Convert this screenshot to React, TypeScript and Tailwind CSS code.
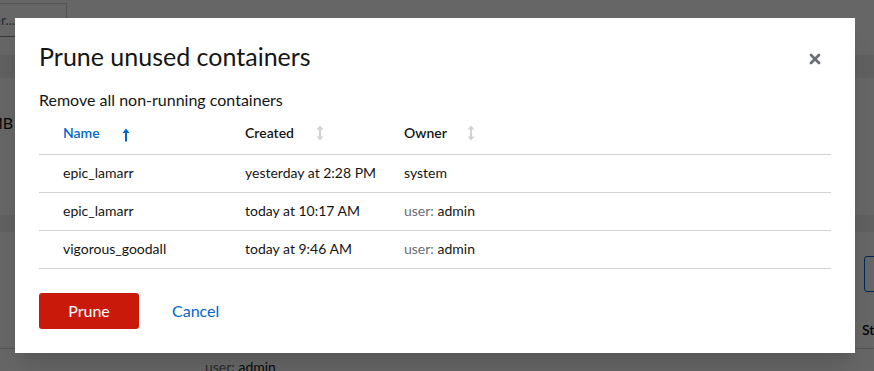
import { X } from "lucide-react";

const rows = [
  { name: "epic_lamarr", created: "yesterday at 2:28 PM", owner: "system", user: false },
  { name: "epic_lamarr", created: "today at 10:17 AM", owner: "admin", user: true },
  { name: "vigorous_goodall", created: "today at 9:46 AM", owner: "admin", user: true },
];

const SortUp = () => (
  <svg width="8" height="14" viewBox="0 0 8 14" className="ml-[22px] inline-block">
    <path d="M4 0.5 L7.5 5 H5 V13.5 H3 V5 H0.5 Z" fill="#0066cc" />
  </svg>
);

const SortNone = () => (
  <svg width="8" height="16" viewBox="0 0 8 16" className="inline-block">
    <path
      d="M4 0.5 L7.5 4.5 H5 V11.5 H7.5 L4 15.5 L0.5 11.5 H3 V4.5 H0.5 Z"
      fill="#d2d2d2"
    />
  </svg>
);

export default function App() {
  return (
    <div className="relative h-[371px] w-[874px] overflow-hidden bg-white font-['Lato','Noto_Sans',sans-serif] text-[#151515]">
      {/* page behind the backdrop */}
      <div className="flex h-[55px] items-start pt-[3px]">
        <div className="-ml-[40px] flex h-[34px] w-[107px] items-center border border-[#d2d2d2] border-b-[#8a8d90] pl-[13px] text-sm text-[#6a6e73]">
          Filter...
        </div>
      </div>
      <div className="h-[23px] bg-[#f0f0f0]" />
      <div className="flex h-[137px] items-start pt-[33px]">
        <span className="-ml-[12px] text-base">MB</span>
      </div>
      <div className="h-[17px] bg-[#f0f0f0]" />
      <div className="flex h-[116px] flex-col items-end">
        <div className="mt-[24px] -mr-[38px] h-[36px] w-[48px] rounded-[3px] border border-[#0066cc]" />
        <div className="mt-[28px] -mr-[6px] w-[18px] overflow-hidden text-sm font-semibold">St</div>
      </div>
      <div className="h-px bg-[#d2d2d2]" />
      <div className="pl-[205px] pt-[8px] text-sm">
        <span className="text-[#6a6e73]">user:</span> admin
      </div>

      {/* backdrop */}
      <div className="absolute inset-0 bg-black/60" />

      {/* modal */}
      <div className="absolute left-[15px] top-[18px] flex h-[335px] w-[840px] flex-col bg-white px-6 pt-[20px] shadow-xl">
        <div className="flex items-start justify-between">
          <h1 className="text-[25px] leading-[36px] text-[#151515]">Prune unused containers</h1>
          <button className="mr-[4px] mt-[9px] flex h-6 w-6 items-center justify-center text-[#6a6e73]">
            <X size={16} strokeWidth={4} />
          </button>
        </div>
        <p className="mt-[14px] text-base leading-6">Remove all non-running containers</p>
        <table className="mt-[1px] w-[792px] border-collapse text-sm">
          <thead>
            <tr className="h-[41px] border-b border-[#d2d2d2] font-semibold">
              <th className="w-[190px] pl-6 text-left font-semibold text-[#0066cc]">
                Name
                <SortUp />
              </th>
              <th className="w-[159px] pl-4 text-left font-semibold">
                <span className="inline-flex items-center gap-[22px]">
                  Created
                  <SortNone />
                </span>
              </th>
              <th className="pl-4 text-left font-semibold">
                <span className="inline-flex items-center gap-[20px]">
                  Owner
                  <SortNone />
                </span>
              </th>
            </tr>
          </thead>
          <tbody>
            {rows.map((r, i) => (
              <tr key={i} className="h-[38px] border-b border-[#d2d2d2]">
                <td className="pl-6">{r.name}</td>
                <td className="pl-4">{r.created}</td>
                <td className="pl-4">
                  {r.user ? (
                    <>
                      <span className="text-[#6a6e73]">user:</span> {r.owner}
                    </>
                  ) : (
                    r.owner
                  )}
                </td>
              </tr>
            ))}
          </tbody>
        </table>
        <div className="mt-[24px] flex items-center gap-[17px]">
          <button className="h-[36px] w-[100px] rounded-[3px] bg-[#c9190b] text-base text-white">
            Prune
          </button>
          <button className="px-4 text-base text-[#0066cc]">Cancel</button>
        </div>
      </div>
    </div>
  );
}
